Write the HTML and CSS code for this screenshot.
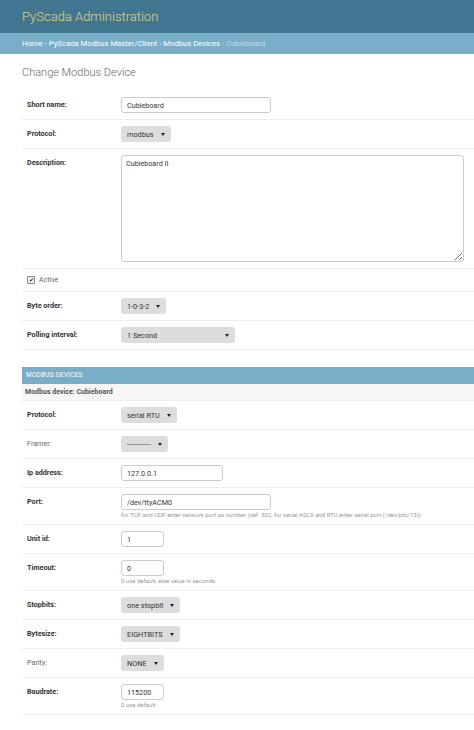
FILE: index.html
```html
<!DOCTYPE html>
<html lang="en">
<head>
  <meta charset="UTF-8">
  <meta name="viewport" content="width=device-width, initial-scale=1.0">
  <title>Change Modbus Device | PyScada Administration</title>
  <link rel="stylesheet" href="styles.css">
</head>
<body>
  <div class="header">
    <h1 class="branding">PyScada Administration</h1>
  </div>
  <div class="breadcrumbs">
    <a href="#">Home</a> &rsaquo;
    <a href="#">PyScada Modbus Master/Client</a> &rsaquo;
    <a href="#">Modbus Devices</a> &rsaquo;
    Cubieboard
  </div>

  <div class="content">
    <h1 class="page-title">Change Modbus Device</h1>

    <fieldset class="module">
      <div class="form-row">
        <label class="required">Short name:</label>
        <div class="field"><input class="input-text" type="text" value="Cubieboard"></div>
      </div>
      <div class="form-row">
        <label class="required">Protocol:</label>
        <div class="field"><span class="select">modbus</span></div>
      </div>
      <div class="form-row">
        <label class="required">Description:</label>
        <div class="field"><textarea class="textarea">Cubieboard II</textarea></div>
      </div>
      <div class="form-row form-row-check">
        <span class="checkbox">&#10004;</span>
        <span class="check-label">Active</span>
      </div>
      <div class="form-row">
        <label class="required">Byte order:</label>
        <div class="field"><span class="select">1-0-3-2</span></div>
      </div>
      <div class="form-row">
        <label class="required">Polling interval:</label>
        <div class="field"><span class="select select-wide">1 Second</span></div>
      </div>
    </fieldset>

    <div class="inline-group">
      <h2 class="caption">Modbus Devices</h2>
      <h3 class="inline-title">Modbus device: Cubieboard</h3>
      <div class="form-row">
        <label class="required">Protocol:</label>
        <div class="field"><span class="select">serial RTU</span></div>
      </div>
      <div class="form-row">
        <label>Framer:</label>
        <div class="field"><span class="select select-empty">----------</span></div>
      </div>
      <div class="form-row">
        <label class="required">Ip address:</label>
        <div class="field"><input class="input-text input-mid" type="text" value="127.0.0.1"></div>
      </div>
      <div class="form-row">
        <label class="required">Port:</label>
        <div class="field">
          <input class="input-text" type="text" value="/dev/ttyACM0">
          <p class="help">for TCP and UDP enter network port as number (def. 502, for serial ASCII and RTU enter serial port (/dev/pts/13))</p>
        </div>
      </div>
      <div class="form-row">
        <label class="required">Unit id:</label>
        <div class="field"><input class="input-text input-small" type="text" value="1"></div>
      </div>
      <div class="form-row">
        <label class="required">Timeout:</label>
        <div class="field">
          <input class="input-text input-small" type="text" value="0">
          <p class="help">0 use default, else value in seconds</p>
        </div>
      </div>
      <div class="form-row">
        <label class="required">Stopbits:</label>
        <div class="field"><span class="select">one stopbit</span></div>
      </div>
      <div class="form-row">
        <label class="required">Bytesize:</label>
        <div class="field"><span class="select">EIGHTBITS</span></div>
      </div>
      <div class="form-row">
        <label>Parity:</label>
        <div class="field"><span class="select">NONE</span></div>
      </div>
      <div class="form-row">
        <label class="required">Baudrate:</label>
        <div class="field">
          <input class="input-text input-small" type="text" value="115200">
          <p class="help">0 use default</p>
        </div>
      </div>
    </div>
  </div>
</body>
</html>
```

FILE: styles.css
```css
body {
  margin: 0;
  font-family: Roboto, "Open Sans", sans-serif;
  color: #333;
  background: #fff;
  overflow: hidden;
}

.header {
  height: 33px;
  background: #417690;
  display: flex;
  align-items: center;
  padding: 0 22px;
}

.branding {
  margin: 0;
  font-size: 13px;
  font-weight: 300;
  color: #dcd685;
}

.breadcrumbs {
  height: 21px;
  line-height: 21px;
  background: #79aec8;
  padding: 0 22px;
  font-size: 7.7px;
  color: #c4dce8;
  white-space: nowrap;
}

.breadcrumbs a {
  color: #fff;
  text-decoration: none;
}

.content {
  padding: 0 0 0 22px;
}

.page-title {
  margin: 12px 0 12px;
  font-size: 11px;
  font-weight: 300;
  color: #666;
  height: 13px;
  line-height: 13px;
}

fieldset.module {
  margin: 0;
  padding: 0;
  border: none;
}

.form-row {
  display: flex;
  align-items: flex-start;
  padding: 6px 5px;
  border-bottom: 1px solid #eee;
  font-size: 7px;
}

.form-row label {
  width: 94px;
  flex-shrink: 0;
  line-height: 16px;
  font-size: 7.2px;
  color: #666;
}

.form-row label.required {
  color: #333;
  font-weight: 700;
}

.field {
  display: flex;
  flex-direction: column;
  align-items: flex-start;
}

.input-text {
  box-sizing: border-box;
  width: 150px;
  height: 16px;
  margin: 0;
  padding: 0 5px;
  border: 1px solid #ccc;
  border-radius: 3px;
  font-family: inherit;
  font-size: 7.2px;
  color: #333;
  background: #fff;
}

.input-mid {
  width: 102px;
}

.input-small {
  width: 43px;
}

.textarea {
  box-sizing: border-box;
  width: 343px;
  height: 107px;
  margin: 0;
  padding: 3px 4px;
  border: 1px solid #ccc;
  border-radius: 3px;
  font-family: inherit;
  font-size: 7.2px;
  color: #333;
}

.select {
  display: inline-flex;
  align-items: center;
  box-sizing: border-box;
  height: 16px;
  padding: 0 6px;
  background: #ddd;
  border-radius: 3px;
  color: #333;
  font-size: 7.3px;
  white-space: nowrap;
}

/* little dropdown triangle */
.select::after {
  content: "";
  margin-left: 7px;
  border-left: 2px solid transparent;
  border-right: 2px solid transparent;
  border-top: 3px solid #222;
}

.select-wide {
  width: 114px;
  justify-content: space-between;
}

.select-empty {
  letter-spacing: 0.4px;
}

.form-row-check {
  align-items: center;
  height: 10px;
}

.checkbox {
  width: 6px;
  height: 6px;
  border: 1px solid #888;
  border-radius: 1px;
  background: #eee;
  color: #333;
  font-size: 6px;
  line-height: 6px;
  text-align: center;
  margin-right: 4px;
}

.check-label {
  color: #666;
}

.help {
  margin: 2px 0 0;
  font-size: 6px;
  line-height: 6px;
  color: #999;
  white-space: nowrap;
}

.inline-group {
  margin-top: 17px;
}

.caption {
  margin: 0;
  height: 17px;
  line-height: 17px;
  padding: 0 4px;
  background: #79aec8;
  color: #fff;
  font-size: 6.5px;
  font-weight: 400;
  text-transform: uppercase;
  letter-spacing: 0.2px;
}

.inline-title {
  margin: 0;
  height: 16px;
  line-height: 16px;
  padding: 0 3px;
  background: #f6f6f6;
  border-bottom: 1px solid #eee;
  color: #555;
  font-size: 7px;
  font-weight: 700;
}
```
